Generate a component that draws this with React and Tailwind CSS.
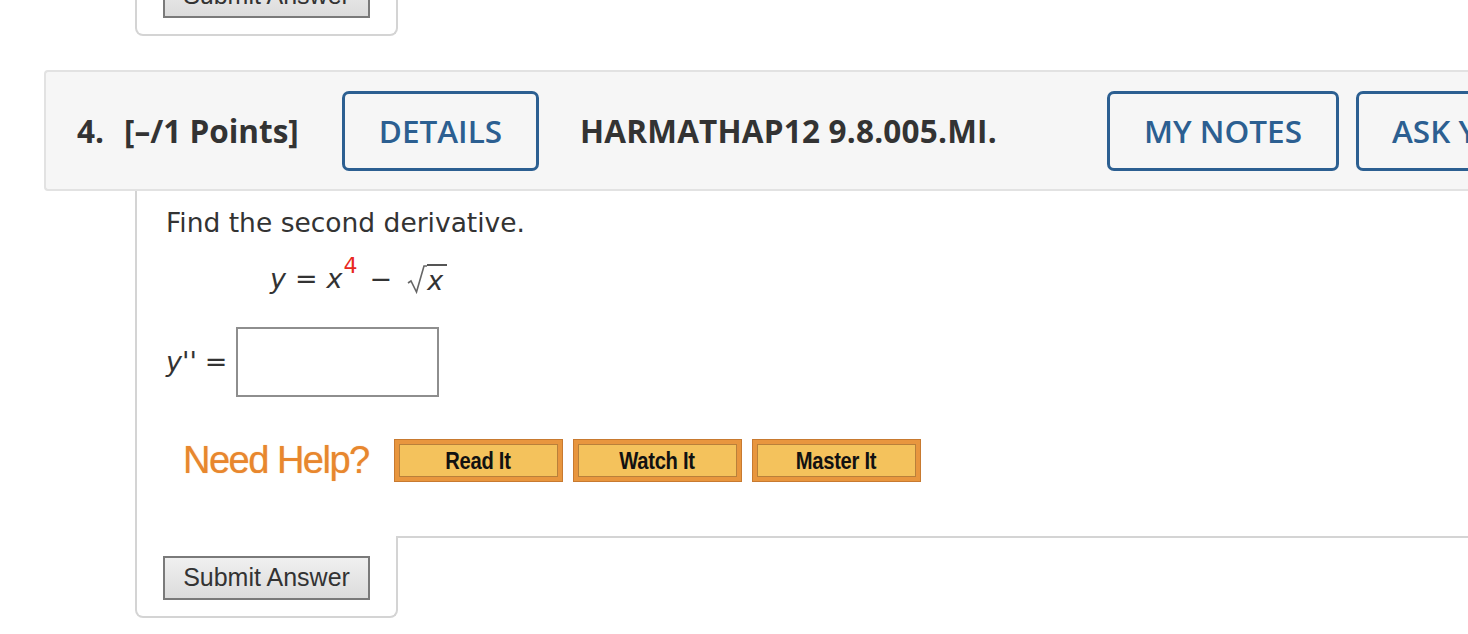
export default function App() {
  const helpButtons = ['Read It', 'Watch It', 'Master It']

  return (
    <div className="w-[1468px] h-[634px] overflow-hidden bg-white font-['Open_Sans',sans-serif]">
      {/* tail of previous question */}
      <div className="ml-[135px] w-[263px] h-[36px] border-2 border-t-0 border-[#d4d4d4] rounded-b-[8px] overflow-hidden">
        <div className="ml-[26px] mt-[-26px] w-[207px] h-[44px] border-2 border-[#7a7a7a] bg-gradient-to-b from-[#f0f0f0] to-[#dcdcdc] flex items-center justify-center text-[25px] text-[#333] font-['Liberation_Sans',Arial,sans-serif]">
          Submit Answer
        </div>
      </div>

      {/* question header */}
      <div className="mt-[34px] ml-[44px] h-[121px] bg-[#f6f6f6] border-2 border-r-0 border-[#e2e2e2] rounded-l-[4px] flex items-center text-[31.5px] whitespace-nowrap">
        <span className="ml-[31px] w-[47px] font-bold text-[#333] shrink-0">4.</span>
        <span className="w-[218px] font-bold text-[#333] shrink-0">[–/1 Points]</span>
        <div className="w-[197px] h-[80px] border-[3px] border-[#2c5f91] rounded-[7px] flex items-center justify-center font-semibold text-[#2c5f91] shrink-0">
          DETAILS
        </div>
        <span className="ml-[41px] font-bold text-[#333] tracking-[0.2px]">HARMATHAP12 9.8.005.MI.</span>
        <div className="ml-auto w-[232px] h-[80px] border-[3px] border-[#2c5f91] rounded-[7px] flex items-center justify-center font-semibold text-[#2c5f91] shrink-0">
          MY NOTES
        </div>
        <div className="ml-[17px] mr-[-160px] w-[272px] h-[80px] border-[3px] border-[#2c5f91] rounded-[7px] flex items-center pl-[33px] font-semibold text-[#2c5f91] shrink-0">
          ASK YOUR TEACHER
        </div>
      </div>

      {/* question body */}
      <div className="ml-[135px] border-l-2 border-[#d4d4d4] pl-[29px] pt-[14px] h-[345px] font-['DejaVu_Sans',Verdana,sans-serif] text-[#333]">
        <p className="text-[26.5px] leading-[36px]">Find the second derivative.</p>
        <div className="mt-[22px] ml-[104px] text-[27px] leading-[32px] flex items-end">
          <i>y</i>
          <span className="ml-[9px]">=</span>
          <i className="ml-[9px]">x</i>
          <span className="text-[#e8281e] text-[22px] relative top-[-13px] ml-[1px]">4</span>
          <span className="ml-[12px]">−</span>
          <span className="ml-[15px] inline-flex items-end">
            <svg width="20" height="30" viewBox="0 0 20 30" className="mb-[1px]">
              <path d="M1 19 L4 17 L9.5 28 L17 2 L20 2" fill="none" stroke="#666" strokeWidth="1.6" />
            </svg>
            <i className="border-t-2 border-[#555] leading-[29px] pr-[4px]">x</i>
          </span>
        </div>
        <div className="mt-[32px] flex items-center">
          <i className="text-[27px]">y''</i>
          <span className="ml-[8px] text-[27px]">=</span>
          <div className="ml-[9px] w-[203px] h-[70px] border-2 border-[#8e8e8e] bg-white" />
        </div>
        <div className="mt-[35px] ml-[17px] flex items-center">
          <span className="text-[38px] tracking-[-1.5px] text-[#e8872e] font-['Liberation_Sans',Arial,sans-serif] [text-shadow:0_0_1px_#f0b070]">
            Need Help?
          </span>
          <div className="ml-[25px] flex gap-[10px]">
            {helpButtons.map(label => (
              <div key={label} className="w-[169px] h-[43px] bg-[#e8963e] border border-[#c87a30] p-[4px]">
                <div className="h-full border border-[#b9803a] bg-[#f4c25c] flex items-center justify-center text-[#111] font-['Liberation_Sans',Arial,sans-serif]">
                  <span className="inline-block text-[24px] font-bold scale-x-[0.84] tracking-[-0.3px]">{label}</span>
                </div>
              </div>
            ))}
          </div>
        </div>
      </div>

      {/* submit tab */}
      <div className="flex">
        <div className="ml-[135px] w-[263px] h-[82px] border-2 border-t-0 border-[#d4d4d4] rounded-b-[8px] pl-[26px] pt-[20px]">
          <div className="w-[207px] h-[44px] border-2 border-[#7a7a7a] bg-gradient-to-b from-[#f0f0f0] to-[#dcdcdc] flex items-center justify-center text-[25px] text-[#333] font-['Liberation_Sans',Arial,sans-serif]">
            Submit Answer
          </div>
        </div>
        <div className="flex-1 border-t-2 border-[#d4d4d4]" />
      </div>
    </div>
  )
}
